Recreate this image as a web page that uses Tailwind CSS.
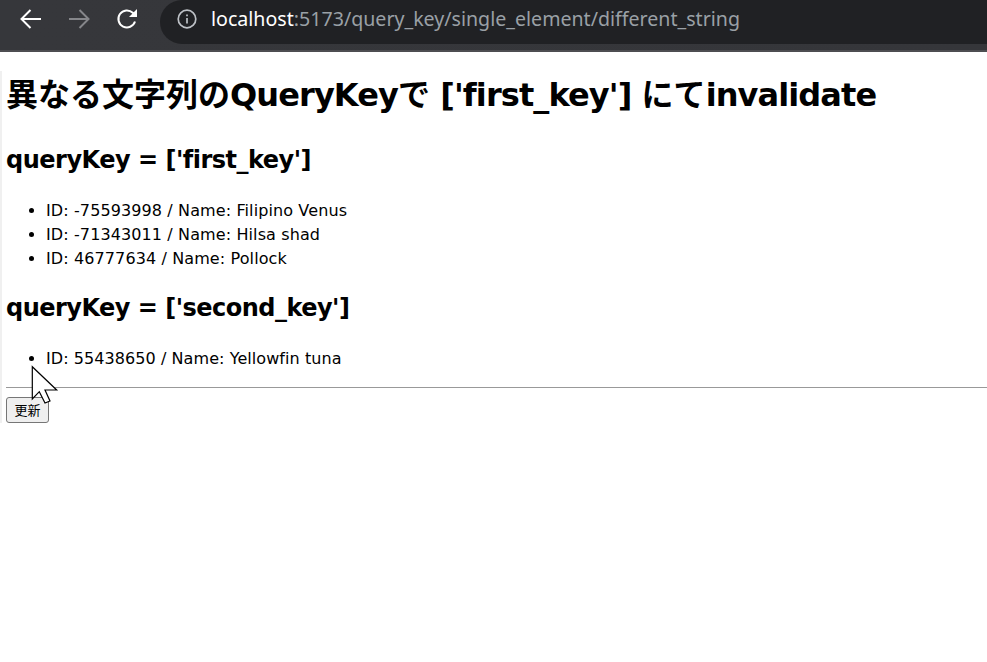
<!DOCTYPE html>
<html lang="ja">
<head>
  <meta charset="UTF-8" />
  <title>different string</title>
  <script src="https://cdn.jsdelivr.net/npm/@tailwindcss/browser@4"></script>
</head>
<body class="relative h-[662px] overflow-hidden bg-white font-['DejaVu_Sans','Noto_Sans_CJK_JP',sans-serif] text-black">
  <!-- Browser toolbar -->
  <header class="flex h-[52px] border-b-2 border-[#4d4e51] bg-gradient-to-r from-[#36373b] to-[#35363a] font-['Noto_Sans',sans-serif]">
    <div class="flex w-[160px] shrink-0 items-center pb-[13px] pl-[19px] text-white">
      <svg class="h-6 w-6" viewBox="0 0 24 24" fill="none" stroke="currentColor" stroke-width="2"><path d="M22 12H3M11.500 3L2.500 12l9 9"/></svg>
      <svg class="ml-[24px] h-6 w-6 text-[#85868a]" viewBox="0 0 24 24" fill="none" stroke="currentColor" stroke-width="2"><path d="M2 12h19M12.500 3l9 9-9 9"/></svg>
      <svg class="ml-[24px] h-6 w-6" viewBox="0 0 24 24" fill="none" stroke="currentColor" stroke-width="2"><path d="M20 14.500A8.500 8.500 0 1 1 17.800 5.800L20 8"/><path d="M22 2v8h-8" fill="currentColor" stroke="none"/></svg>
    </div>
    <div class="flex h-[44px] flex-1 items-center rounded-l-[22px] bg-[#202124] pb-[6px] pl-[17px]">
      <svg class="h-5 w-5 shrink-0 text-[#bdc1c6]" viewBox="0 0 20 20" fill="none" stroke="currentColor" stroke-width="1.700"><circle cx="10" cy="10" r="8.800"/><path d="M10 9v5.500M10 5.500v1.800"/></svg>
      <div class="ml-[14px] text-[19.600px] text-[#9aa0a6]"><span class="text-white">localhost</span>:5173/query_key/single_element/different_string</div>
    </div>
  </header>

  <!-- Page -->
  <main class="border-l-2 border-[#f0f0f0] pl-[4px]">
    <h1 class="mt-[19px] text-[32px] leading-[48px] font-bold">異なる文字列の<span class="tracking-[-0.9px]">QueryKey</span>で<span class="tracking-[-0.9px]"> ['first_key'] </span>にて<span class="tracking-[-0.9px]">invalidate</span></h1>
    <h2 class="mt-[23px] text-2xl leading-9 font-bold tracking-[-0.5px]">queryKey = ['first_key']</h2>
    <ul class="mt-[21px] list-disc pl-[40px] text-base leading-6 tracking-[0.11px]">
      <li>ID: -75593998 / Name: Filipino Venus</li>
      <li>ID: -71343011 / Name: Hilsa shad</li>
      <li>ID: 46777634 / Name: Pollock</li>
    </ul>
    <h2 class="mt-[19px] text-2xl leading-9 font-bold tracking-[-0.52px]">queryKey = ['second_key']</h2>
    <ul class="mt-[21px] list-disc pl-[40px] text-base leading-6 tracking-[0.07px]">
      <li>ID: 55438650 / Name: Yellowfin tuna</li>
    </ul>
    <hr class="mt-[16px] border-t border-[#999]" />
    <button class="mt-[9px] block h-[26px] w-[43px] rounded-[3px] border border-[#767676] bg-[#efefef] text-[13px] leading-none">更新</button>
  </main>

  <!-- Mouse cursor captured in the recording -->
  <svg class="absolute top-[365px] left-[31px] h-[40px] w-[28px]" viewBox="0 0 28 40"><path d="M1.300 1.700V34l7-7.300L14 38l5-2-5-11h11.700z" fill="#fff" stroke="#000" stroke-width="1.200"/></svg>
</body>
</html>
